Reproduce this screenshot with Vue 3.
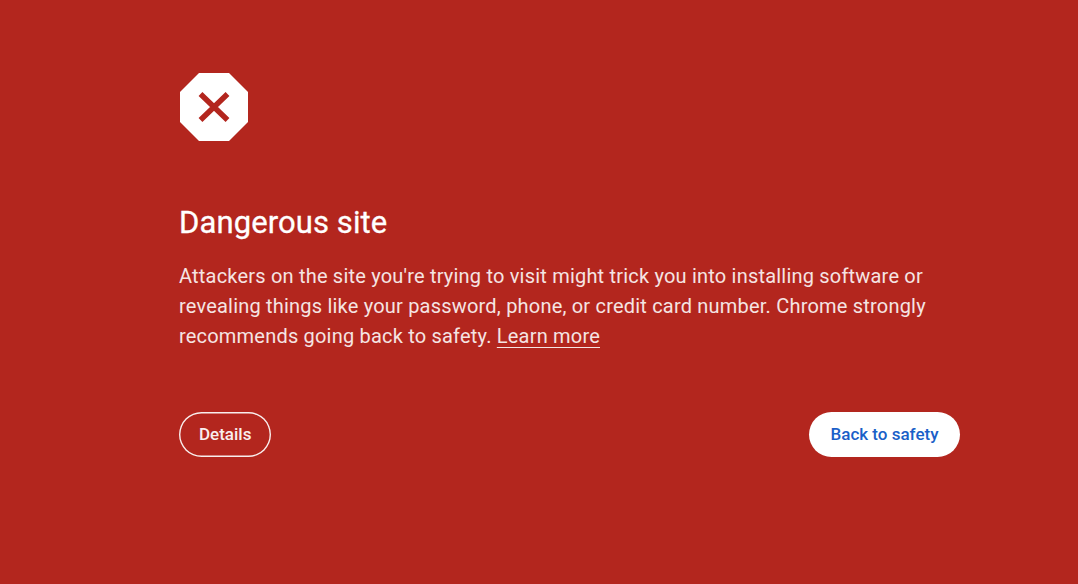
<script setup>
const title = 'Dangerous site'
</script>

<template>
  <main class="page">
    <div class="content">
      <svg class="icon" viewBox="0 0 68 68" width="68" height="68" aria-hidden="true">
        <polygon points="19,0 49,0 68,19 68,49 49,68 19,68 0,49 0,19" fill="#fff" />
        <path d="M20.5 21 L47.5 47 M47.5 21 L20.5 47" stroke="#b3261e" stroke-width="5.5" fill="none" />
      </svg>
      <h1 class="title">{{ title }}</h1>
      <p class="text">
        Attackers on the site you're trying to visit might trick you into installing software or
        revealing things like your password, phone, or credit card number. Chrome strongly
        recommends going back to safety. <a class="link" href="#">Learn more</a>
      </p>
      <div class="actions">
        <button class="btn btn--outline">Details</button>
        <button class="btn btn--solid">Back to safety</button>
      </div>
    </div>
  </main>
</template>

<style scoped>
.page {
  height: 584px;
  background: #b3261e;
  padding: 73px 0 0 179px;
  box-sizing: border-box;
  font-family: Roboto, "Liberation Sans", sans-serif;
  color: #fff;
  overflow: hidden;
}

.content {
  width: 781px;
}

.icon {
  display: block;
  margin-left: 1px;
}

.title {
  margin: 64px 0 0;
  font-size: 31px;
  line-height: 36px;
  font-weight: 400;
  letter-spacing: 0.1px;
  -webkit-text-stroke: 0.3px #fff;
}

.text {
  margin: 20px 0 0;
  font-size: 20px;
  line-height: 30px;
  letter-spacing: 0.2px;
  color: #f5e4e3;
}

.link {
  color: #f5e4e3;
  text-decoration: underline;
  text-decoration-thickness: 1px;
  text-underline-offset: 4px;
}

.actions {
  display: flex;
  justify-content: space-between;
  margin-top: 61px;
}

.btn {
  height: 45px;
  border-radius: 23px;
  border: none;
  font-family: inherit;
  font-size: 17px;
  font-weight: 500;
  padding: 0 20px 2px;
  cursor: pointer;
}

.btn--outline {
  background: transparent;
  box-shadow: inset 0 0 0 1.4px #f9eeed;
  color: #f9eeed;
}

.btn--solid {
  background: #fff;
  color: #1a5fc8;
  padding: 0 21px 2px;
  width: 151px;
}
</style>
